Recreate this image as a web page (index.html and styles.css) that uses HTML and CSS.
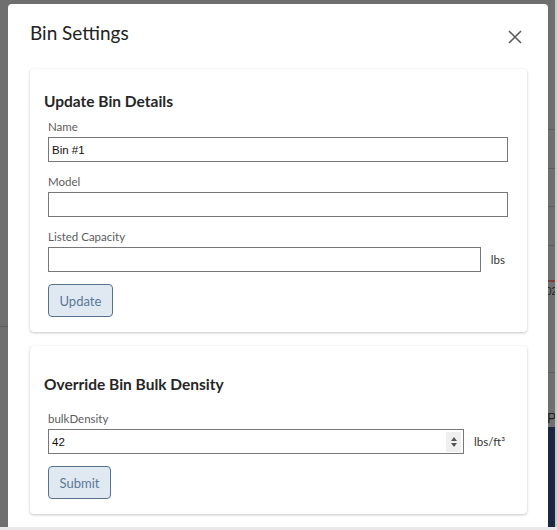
FILE: index.html
```html
<!DOCTYPE html>
<html lang="en">
<head>
<meta charset="utf-8">
<title>Bin Settings</title>
<link rel="stylesheet" href="styles.css">
</head>
<body>
<div class="page">
  <div class="page-line l1"></div>
  <div class="page-line l2"></div>
  <div class="page-line l3"></div>
  <div class="page-line l4"></div>
  <div class="page-red"></div>
  <div class="page-text t1">02</div>
  <div class="page-line l5"></div>
  <div class="page-text t2">P</div>
  <div class="page-navy"></div>
  <div class="page-line l6"></div>
  <div class="vscroll"></div>
  <div class="hscroll"></div>
</div>

<div class="modal">
  <div class="modal-header">
    <h2 class="modal-title">Bin Settings</h2>
    <button class="close" aria-label="Close">
      <svg width="14" height="14" viewBox="0 0 14 14"><path d="M1 1 L13 13 M13 1 L1 13" stroke="#5a5a5a" stroke-width="1.6" fill="none"/></svg>
    </button>
  </div>
  <div class="modal-body">
    <section class="card card-details">
      <h3 class="card-title">Update Bin Details</h3>
      <div class="form">
        <div class="field">
          <label class="label">Name</label>
          <input class="input" type="text" value="Bin #1">
        </div>
        <div class="field">
          <label class="label">Model</label>
          <input class="input" type="text" value="">
        </div>
        <div class="field">
          <label class="label">Listed Capacity</label>
          <div class="row">
            <input class="input" type="text" value="">
            <span class="unit">lbs</span>
          </div>
        </div>
        <button class="btn btn-update">Update</button>
      </div>
    </section>

    <section class="card card-density">
      <h3 class="card-title">Override Bin Bulk Density</h3>
      <div class="form">
        <div class="field">
          <label class="label">bulkDensity</label>
          <div class="row">
            <div class="num">
              <input class="num-input" type="text" value="42">
              <span class="spin">
                <svg width="8" height="14" viewBox="0 0 8 14"><path d="M4 2 L7 6 L1 6 Z M4 12 L7 8 L1 8 Z" fill="#555"/></svg>
              </span>
            </div>
            <span class="unit">lbs/ft³</span>
          </div>
        </div>
        <button class="btn">Submit</button>
      </div>
    </section>
  </div>
</div>
</body>
</html>
```
FILE: styles.css
```css
html, body {
  margin: 0;
  padding: 0;
}
body {
  width: 557px;
  height: 530px;
  overflow: hidden;
  background: #6f6f6f;
  font-family: Lato, "Open Sans", sans-serif;
  position: relative;
}

/* dimmed page underneath the dialog */
.page {
  position: absolute;
  inset: 0;
}
.page-line {
  position: absolute;
  height: 1px;
  background: #5c5c5c;
}
.l1 { left: 548px; width: 9px; top: 129px; }
.l2 { left: 548px; width: 9px; top: 168px; }
.l3 { left: 548px; width: 9px; top: 206px; }
.l4 { left: 548px; width: 9px; top: 245px; }
.l5 { left: 548px; width: 9px; top: 372px; }
.l6 { left: 0; width: 8px; top: 326px; }
.page-red {
  position: absolute;
  left: 548px; width: 9px; top: 280px; height: 2px;
  background: #7a3a36;
}
.page-text {
  position: absolute;
  font-family: "Liberation Sans", sans-serif;
  color: #1d1d1d;
}
.t1 { left: 546px; top: 286px; font-size: 10px; }
.t2 { left: 547px; top: 410px; font-size: 14px; }
.page-navy {
  position: absolute;
  left: 548px; width: 9px; top: 427px; height: 103px;
  background: #1b2640;
}
.vscroll {
  position: absolute;
  right: 0; top: 0; width: 2px; height: 530px;
  background: #c9c9c9;
}
.hscroll {
  position: absolute;
  left: 0; bottom: 0; width: 557px; height: 3px;
  background: #e9e9e9;
}

/* dialog */
.modal {
  position: absolute;
  left: 8px;
  top: 4px;
  width: 540px;
  height: 523px;
  background: #fff;
  border-radius: 4px 4px 0 0;
  box-sizing: border-box;
  overflow: hidden;
}
.modal-header {
  display: flex;
  justify-content: space-between;
  align-items: flex-start;
  padding: 17px 26px 0 22px;
  height: 24px;
}
.modal-title {
  margin: 0;
  font-weight: 400;
  font-size: 19px;
  line-height: 24px;
  color: #222;
}
.close {
  border: 0;
  background: none;
  padding: 0;
  margin-top: 9px;
  width: 14px;
  height: 14px;
  display: block;
}
.close svg { display: block; }

.modal-body {
  padding: 24px 21px 0 22px;
  display: flex;
  flex-direction: column;
  gap: 14px;
}

.card {
  background: #fff;
  border-radius: 4px;
  box-shadow: 0 1px 3px rgba(0,0,0,0.22), 0 0 1px rgba(0,0,0,0.08);
  padding: 22px 19px 15px 14px;
}
.card-density {
  padding-top: 28px;
  padding-bottom: 15px;
}
.card-title {
  margin: 0 0 8px;
  font-size: 15.5px;
  font-weight: 700;
  line-height: 20px;
  color: #262626;
}
.card-density .card-title {
  margin-bottom: 17px;
}

.form {
  padding-left: 4px;
}
.field {
  margin-bottom: 12px;
}
.label {
  display: block;
  font-size: 11.5px;
  line-height: 16px;
  color: #5c5c5c;
  margin-bottom: 2px;
}
.input {
  display: block;
  box-sizing: border-box;
  width: 100%;
  height: 25px;
  border: 1px solid #777;
  border-radius: 0;
  padding: 0 3px;
  font-family: "Liberation Sans", Arial, sans-serif;
  font-size: 11.5px;
  color: #111;
  outline: none;
  background: #fff;
}
.row {
  display: flex;
  align-items: center;
}
.row .input {
  flex: 1;
  width: auto;
}
.unit {
  font-size: 11.5px;
  color: #333;
  margin-left: 10px;
  margin-right: 3px;
}

.num {
  flex: 1;
  display: flex;
  align-items: center;
  box-sizing: border-box;
  height: 25px;
  border: 1px solid #777;
  padding: 0 2px 0 3px;
  max-width: 416px;
}
.card-density .row {
  justify-content: space-between;
}
.num-input {
  flex: 1;
  border: 0;
  outline: none;
  padding: 0;
  font-family: "Liberation Sans", Arial, sans-serif;
  font-size: 11.5px;
  color: #111;
  min-width: 0;
  background: transparent;
}
.spin {
  width: 15px;
  height: 20px;
  background: #efefef;
  display: flex;
  align-items: center;
  justify-content: center;
}
.spin svg { display: block; }

.btn {
  display: block;
  height: 33px;
  padding: 0 10.5px;
  border: 1px solid #56718d;
  border-radius: 4px;
  background: #e0e9f2;
  color: #5a7896;
  font-family: Lato, "Open Sans", sans-serif;
  font-size: 13px;
}
.btn-update {
  margin-top: 1px;
}
```
